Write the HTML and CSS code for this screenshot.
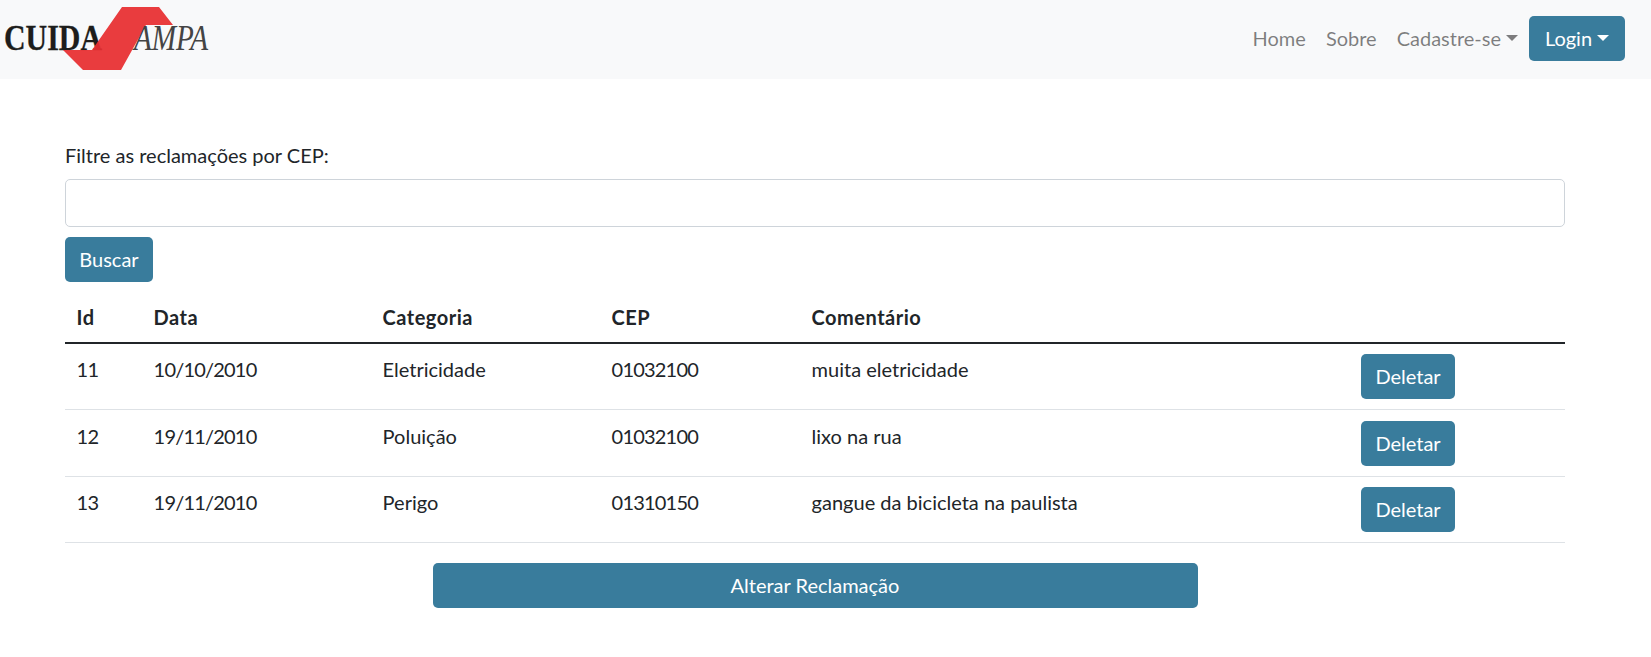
FILE: index.html
```html
<!DOCTYPE html>
<html lang="en">
<head>
    <meta charset="UTF-8">
    <meta name="viewport" content="width=device-width, initial-scale=1.0">
    <title>Cuida Sampa</title>
    <link rel="stylesheet" href="styles.css">
</head>
<body>
    <nav class="navbar">
        <a class="brand" href="#">
            <svg class="logo" width="240" height="78" viewBox="0 0 240 78">
                <text class="logo-cuida" x="4" y="49" textLength="98" lengthAdjust="spacingAndGlyphs">CUIDA</text>
                <polygon class="logo-shape" points="122,6 159,6 173,24 146,24 121,69 83,69 63,49 92,49"/>
                <text class="logo-ampa" x="134" y="49" textLength="74" lengthAdjust="spacingAndGlyphs">AMPA</text>
            </svg>
        </a>
        <ul class="nav-links">
            <li><a href="#">Home</a></li>
            <li><a href="#">Sobre</a></li>
            <li><a class="caret" href="#">Cadastre-se</a></li>
        </ul>
        <button class="btn btn-login caret">Login</button>
    </nav>

    <main class="content">
        <form action="#" class="filter">
            <label for="cep">Filtre as reclamações por CEP:</label>
            <input id="cep" type="text">
            <button class="btn btn-search">Buscar</button>
        </form>

        <table class="complaints">
            <colgroup>
                <col class="col-id">
                <col class="col-date">
                <col class="col-cat">
                <col class="col-cep">
                <col class="col-comment">
                <col>
            </colgroup>
            <thead>
                <tr>
                    <th>Id</th>
                    <th>Data</th>
                    <th>Categoria</th>
                    <th>CEP</th>
                    <th>Comentário</th>
                    <th></th>
                </tr>
            </thead>
            <tbody>
                <tr>
                    <td class="num">11</td>
                    <td class="num">10/10/2010</td>
                    <td>Eletricidade</td>
                    <td class="num">01032100</td>
                    <td>muita eletricidade</td>
                    <td class="actions"><button class="btn">Deletar</button></td>
                </tr>
                <tr>
                    <td class="num">12</td>
                    <td class="num">19/11/2010</td>
                    <td>Poluição</td>
                    <td class="num">01032100</td>
                    <td>lixo na rua</td>
                    <td class="actions"><button class="btn">Deletar</button></td>
                </tr>
                <tr>
                    <td class="num">13</td>
                    <td class="num">19/11/2010</td>
                    <td>Perigo</td>
                    <td class="num">01310150</td>
                    <td>gangue da bicicleta na paulista</td>
                    <td class="actions"><button class="btn">Deletar</button></td>
                </tr>
            </tbody>
        </table>

        <button class="btn btn-wide">Alterar Reclamação</button>
    </main>
</body>
</html>
```

FILE: styles.css
```css
*{
    margin: 0;
    padding: 0;
    box-sizing: border-box;
}

body{
    font-family: Lato, "Open Sans", sans-serif;
    font-size: 20px;
    line-height: 29px;
    color: #212529;
    background: #fff;
}

.navbar{
    display: flex;
    align-items: center;
    height: 79px;
    padding: 0 26px 3px 0;
    background: #f8f9fa;
}

.brand{
    display: block;
    height: 78px;
    margin-top: 3px;
    margin-right: auto;
}

.logo-cuida{
    font-family: "Liberation Serif", serif;
    font-weight: 700;
    font-size: 36px;
    fill: #1d1d1b;
    stroke: #1d1d1b;
    stroke-width: 0.3;
}

.logo-ampa{
    font-family: "Liberation Serif", serif;
    font-style: italic;
    font-size: 36px;
    fill: #444;
}

.logo-shape{
    fill: #e72d2f;
    opacity: 0.93;
}

.nav-links{
    display: flex;
    list-style: none;
    gap: 20px;
    margin-right: 11px;
}

.nav-links a{
    color: rgba(0,0,0,0.5);
    text-decoration: none;
}

.caret::after{
    content: "";
    display: inline-block;
    margin-left: 5px;
    vertical-align: 5px;
    border-top: 6px solid;
    border-left: 6px solid transparent;
    border-right: 6px solid transparent;
}

.btn{
    height: 45px;
    padding: 0 15px;
    border: none;
    border-radius: 5px;
    color: #fff;
    background: #397c9c;
    font: inherit;
    cursor: pointer;
}

.btn-login{
    width: 96px;
    padding: 0;
}

.btn-search{
    width: 88px;
    padding: 0;
}

.content{
    width: 1500px;
    margin-left: 65px;
    padding-top: 62px;
}

.filter label{
    display: block;
    height: 38px;
}

.filter input{
    display: block;
    width: 100%;
    height: 48px;
    margin-bottom: 10px;
    border: 1px solid #ced4da;
    border-radius: 5px;
    outline: none;
}

.complaints{
    width: 100%;
    margin-top: 10px;
    border-collapse: collapse;
    table-layout: fixed;
}

.col-id{ width: 77px; }
.col-date{ width: 229px; }
.col-cat{ width: 229px; }
.col-cep{ width: 200px; }
.col-comment{ width: 550px; }

.complaints th{
    height: 51px;
    padding: 0 11.6px;
    text-align: left;
    font-weight: 700;
    letter-spacing: 0.5px;
    border-bottom: 2px solid #212529;
}

.complaints td{
    height: 66px;
    padding: 11.3px 11.6px 10px;
    vertical-align: top;
    border-bottom: 1px solid #dee2e6;
}

.complaints .num{
    letter-spacing: -0.8px;
}

.complaints .actions{
    padding: 10.3px 11px 10px;
}

.actions .btn{
    width: 94px;
    padding: 0;
}

.btn-wide{
    display: block;
    width: 765px;
    margin: 20px auto 0;
}
```
